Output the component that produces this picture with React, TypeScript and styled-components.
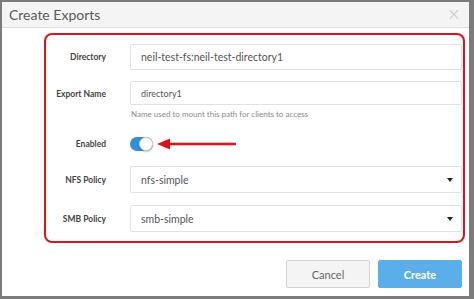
import styled, { createGlobalStyle } from "styled-components";

const Global = createGlobalStyle`
  html, body { margin: 0; padding: 0; background: #fff; }
  body { font-family: Lato, "Open Sans", "Liberation Sans", sans-serif; }
  * { box-sizing: border-box; }
`;

const Frame = styled.div`
  width: 474px;
  height: 299px;
  border-style: solid;
  border-color: #7b7b7b;
  border-width: 2px 5px 3px 2px;
  background: #fff;
  display: flex;
  flex-direction: column;
`;

const Header = styled.header`
  height: 26px;
  background: #f4f4f4;
  border-bottom: 1px solid #dcdcdc;
  display: flex;
  align-items: center;
  justify-content: space-between;
  padding: 0 8px 0 7px;
`;

const Title = styled.h2`
  margin: 0;
  font-size: 14px;
  font-weight: 400;
  color: #5a5a5a;
`;

const Close = styled.span`
  font-size: 17px;
  color: #c8c8c8;
  line-height: 1;
  font-family: "DejaVu Sans", sans-serif;
  font-weight: 300;
`;

const Body = styled.main`
  flex: 1;
  display: flex;
  flex-direction: column;
  padding: 5px 4px 0 42px;
`;

const Highlight = styled.section`
  border: 2px solid #e0121c;
  border-radius: 8px;
  padding: 9px 1px 9px 0;
  display: flex;
  flex-direction: column;
`;

const Row = styled.div<{ $mt?: number; $align?: string }>`
  display: grid;
  grid-template-columns: 60px 1fr;
  column-gap: 24px;
  align-items: ${(p) => p.$align ?? "center"};
  margin-top: ${(p) => p.$mt ?? 0}px;
`;

const Label = styled.label<{ $pt?: number }>`
  text-align: right;
  font-size: 8.5px;
  font-weight: 700;
  color: #444;
  white-space: nowrap;
  padding-top: ${(p) => p.$pt ?? 0}px;
`;

const Field = styled.div<{ $h: number; $size: number }>`
  height: ${(p) => p.$h}px;
  border: 1px solid #e2e2e2;
  border-radius: 2px;
  background: #fff;
  display: flex;
  align-items: center;
  justify-content: space-between;
  padding: 0 8px 0 10px;
  font-size: ${(p) => p.$size}px;
  color: #555;
`;

const Caret = styled.span`
  width: 0;
  height: 0;
  border-left: 3.5px solid transparent;
  border-right: 3.5px solid transparent;
  border-top: 4px solid #222;
`;

const Help = styled.div`
  font-size: 8px;
  color: #8a8a8a;
  margin-top: 4px;
  padding-left: 1px;
`;

const ToggleLine = styled.div`
  display: flex;
  align-items: center;
  gap: 4px;
`;

const Toggle = styled.span`
  position: relative;
  width: 23px;
  height: 14px;
  border-radius: 7px;
  background: #2f8ee0;
  display: inline-block;
`;

const Knob = styled.span`
  position: absolute;
  right: 0;
  top: 0;
  width: 14px;
  height: 14px;
  border-radius: 50%;
  background: #fff;
  border: 1px solid #d0d0d0;
  box-shadow: 0 1px 2px rgba(0, 0, 0, 0.25);
`;

const Footer = styled.footer`
  display: flex;
  justify-content: flex-end;
  gap: 8px;
  padding: 17px 3px 0 0;
`;

const Button = styled.button<{ $primary?: boolean }>`
  width: 84px;
  height: 28px;
  border-radius: 2px;
  font-family: inherit;
  font-size: 11px;
  font-weight: ${(p) => (p.$primary ? 700 : 400)};
  color: ${(p) => (p.$primary ? "#fff" : "#666")};
  background: ${(p) => (p.$primary ? "#5aaeea" : "#f4f4f4")};
  border: 1px solid ${(p) => (p.$primary ? "#5aaeea" : "#d4d4d4")};
`;

export default function App() {
  return (
    <>
      <Global />
      <Frame>
        <Header>
          <Title>Create Exports</Title>
          <Close>×</Close>
        </Header>
        <Body>
          <Highlight>
            <Row>
              <Label>Directory</Label>
              <Field $h={26} $size={10.5}>neil-test-fs:neil-test-directory1</Field>
            </Row>
            <Row $mt={11} $align="start">
              <Label $pt={8}>Export Name</Label>
              <div>
                <Field $h={24} $size={9}>directory1</Field>
                <Help>Name used to mount this path for clients to access</Help>
              </div>
            </Row>
            <Row $mt={18}>
              <Label>Enabled</Label>
              <ToggleLine>
                <Toggle>
                  <Knob />
                </Toggle>
                <svg width="80" height="12" viewBox="0 0 80 12">
                  <polygon points="0,6 13,0.5 13,11.5" fill="#e0121c" />
                  <rect x="12" y="4.7" width="67" height="2.6" fill="#e0121c" />
                </svg>
              </ToggleLine>
            </Row>
            <Row $mt={15}>
              <Label>NFS Policy</Label>
              <Field $h={27} $size={10.5}>
                nfs-simple
                <Caret />
              </Field>
            </Row>
            <Row $mt={12}>
              <Label>SMB Policy</Label>
              <Field $h={27} $size={10.5}>
                smb-simple
                <Caret />
              </Field>
            </Row>
          </Highlight>
          <Footer>
            <Button>Cancel</Button>
            <Button $primary>Create</Button>
          </Footer>
        </Body>
      </Frame>
    </>
  );
}
